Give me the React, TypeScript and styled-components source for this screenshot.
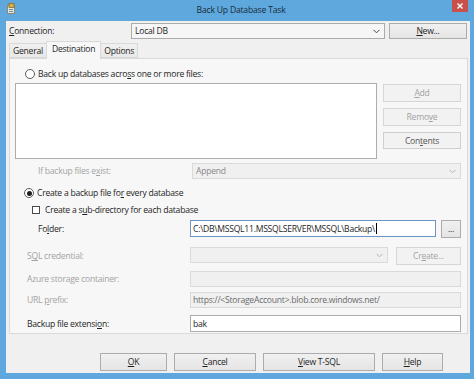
import React from 'react';
import styled, { createGlobalStyle } from 'styled-components';

const FONT = `"Open Sans", "Noto Sans", sans-serif`;

const Global = createGlobalStyle`
  html, body { margin: 0; padding: 0; background: #5ea8dd; }
  body { font-family: ${FONT}; font-size: 8.6px; letter-spacing: -0.25px; color: #1e1e1e; }
  * { box-sizing: border-box; }
`;

const Frame = styled.div`
  width: 474px;
  height: 379px;
  background: #5ea8dd;
  display: flex;
  flex-direction: column;
`;

const TitleBar = styled.div`
  height: 21px;
  display: flex;
  align-items: flex-start;
  padding: 0 6px 0 7px;
`;

const TitleIcon = styled.div`
  width: 9px;
  height: 11px;
  margin-top: 3px;
  display: flex;
`;

const TitleText = styled.div`
  flex: 1;
  text-align: center;
  padding-left: 14px;
  line-height: 20px;
  font-size: 8.6px;
  letter-spacing: -0.2px;
  color: #1b2a38;
`;

const CloseBtn = styled.div`
  width: 16px;
  height: 12px;
  background: #c7504b;
  color: #fff;
  display: flex;
  align-items: center;
  justify-content: center;
`;

const Body = styled.div`
  flex: 1;
  display: flex;
  padding: 0 4px 6px 6px;
`;

const Client = styled.div`
  flex: 1;
  background: #f0f0f0;
  display: flex;
  flex-direction: column;
  padding: 2px 2px 0 3px;
`;

const ConnRow = styled.div`
  display: grid;
  grid-template-columns: 118px 254px 78px;
  column-gap: 4px;
  height: 16px;
  align-items: center;
`;

const Label = styled.span<{ $disabled?: boolean }>`
  color: ${(p) => (p.$disabled ? '#a3a3a3' : '#1e1e1e')};
  white-space: nowrap;
`;

const U = styled.span`
  text-decoration: underline;
`;

const Combo = styled.div<{ $disabled?: boolean }>`
  height: 16px;
  border: 1px solid ${(p) => (p.$disabled ? '#dadada' : '#acacac')};
  background: ${(p) => (p.$disabled ? '#f0f0f0' : '#f6f6f6')};
  display: flex;
  align-items: center;
  padding: 0 4px 0 3px;
  color: ${(p) => (p.$disabled ? '#8a8a8a' : '#1e1e1e')};
  span.val { flex: 1; }
`;

const Button = styled.div<{ $disabled?: boolean; $soft?: boolean; $w?: number; $h?: number }>`
  width: ${(p) => (p.$w ? `${p.$w}px` : 'auto')};
  height: ${(p) => p.$h ?? 18}px;
  border: 1px solid ${(p) => (p.$disabled ? '#d6d6d6' : p.$soft ? '#cfcfcf' : '#acacac')};
  background: ${(p) =>
    p.$disabled || p.$soft ? '#f2f2f2' : 'linear-gradient(#f0f0f0, #e5e5e5)'};
  color: ${(p) => (p.$disabled ? '#a3a3a3' : p.$soft ? '#555' : '#1e1e1e')};
  display: flex;
  align-items: center;
  justify-content: center;
  white-space: nowrap;
`;

const TabStrip = styled.div`
  display: flex;
  align-items: flex-end;
  height: 17px;
  margin-top: 2px;
`;

const Tab = styled.div<{ $active?: boolean }>`
  height: ${(p) => (p.$active ? 18 : 15)}px;
  padding: 0 ${(p) => (p.$active ? 5 : 3)}px;
  margin: 0 ${(p) => (p.$active ? -1 : 0)}px ${(p) => (p.$active ? -1 : 0)}px;
  border: 1px solid #d9d9d9;
  border-bottom: ${(p) => (p.$active ? 'none' : '1px solid #d9d9d9')};
  background: ${(p) => (p.$active ? '#f7f7f7' : 'linear-gradient(#f0f0f0, #e8e8e8)')};
  position: relative;
  z-index: ${(p) => (p.$active ? 1 : 0)};
  display: flex;
  align-items: ${(p) => (p.$active ? 'flex-start' : 'center')};
  padding-top: ${(p) => (p.$active ? 1 : 0)}px;
`;

const Panel = styled.div`
  height: 276px;
  border: 1px solid #d9d9d9;
  background: #f7f7f7;
  display: flex;
  flex-direction: column;
  padding: 0 6px 0 5px;
`;

const OptionRow = styled.div<{ $mt: number; $indent: number }>`
  height: 14px;
  margin-top: ${(p) => p.$mt}px;
  padding-left: ${(p) => p.$indent}px;
  display: flex;
  align-items: center;
  gap: 3px;
`;

const Radio = styled.div<{ $checked?: boolean }>`
  width: 10px;
  height: 10px;
  border-radius: 50%;
  border: 1px solid #5c5c5c;
  background: #fff;
  display: flex;
  align-items: center;
  justify-content: center;
  &::after {
    content: '';
    width: 5px;
    height: 5px;
    border-radius: 50%;
    background: ${(p) => (p.$checked ? '#1e1e1e' : 'transparent')};
  }
`;

const Check = styled.div`
  width: 8px;
  height: 8px;
  border: 1px solid #4a4a4a;
  background: #fff;
  margin-right: 2px;
`;

const ListRow = styled.div`
  display: flex;
  gap: 6px;
  margin-top: 2px;
  height: 76px;
`;

const ListBox = styled.div`
  width: 362px;
  height: 76px;
  border: 1px solid #acacac;
  background: #fff;
`;

const SideButtons = styled.div`
  display: flex;
  flex-direction: column;
  gap: 6px;
  padding-top: 1px;
`;

const FormRow = styled.div<{ $mt: number; $h: number }>`
  display: grid;
  grid-template-columns: 175px 1fr;
  align-items: center;
  margin-top: ${(p) => p.$mt}px;
  height: ${(p) => p.$h}px;
`;

const FieldLabel = styled(Label)<{ $indent: number }>`
  padding-left: ${(p) => p.$indent}px;
`;

const FieldGroup = styled.div<{ $gap?: number; $inset?: number }>`
  display: flex;
  align-items: flex-start;
  height: 100%;
  gap: ${(p) => p.$gap ?? 5}px;
  padding-left: ${(p) => p.$inset ?? 0}px;
`;

const TextInput = styled.div<{ $disabled?: boolean; $focus?: boolean; $h?: number }>`
  flex: 1;
  height: ${(p) => p.$h ?? 16}px;
  border: 1px solid
    ${(p) => (p.$focus ? '#6d94c4' : p.$disabled ? '#dadada' : '#acacac')};
  background: ${(p) => (p.$disabled ? '#f0f0f0' : '#fff')};
  color: ${(p) => (p.$disabled ? '#6a6a6a' : '#1e1e1e')};
  display: flex;
  align-items: center;
  padding: 0 2px;
  white-space: nowrap;
  overflow: hidden;
`;

const Caret = styled.span`
  display: inline-block;
  width: 1px;
  height: 11px;
  background: #000;
  margin-left: 1px;
`;

const ComboFill = styled(Combo)`
  flex: 1;
`;

const ButtonRow = styled.div`
  display: flex;
  justify-content: flex-end;
  gap: 7px;
  margin-top: 19px;
  padding-right: 25px;
`;

const Chevron = ({ color }: { color: string }) => (
  <svg width="7" height="5" viewBox="0 0 7 5">
    <path d="M0.5 0.8 L3.5 3.8 L6.5 0.8" fill="none" stroke={color} strokeWidth="1" />
  </svg>
);

export default function App() {
  return (
    <>
      <Global />
      <Frame>
        <TitleBar>
          <TitleIcon>
            <svg width="9" height="11" viewBox="0 0 9 11">
              <rect x="0.5" y="2.5" width="7" height="8" fill="#e9e4d2" stroke="#8a8a7a" />
              <rect x="2" y="0.5" width="5" height="4" fill="#d9b24a" stroke="#8a6d2a" strokeWidth="0.8" />
              <rect x="2" y="6" width="4" height="1" fill="#6a8fb5" />
              <rect x="2" y="8" width="4" height="1" fill="#6a8fb5" />
            </svg>
          </TitleIcon>
          <TitleText>Back Up Database Task</TitleText>
          <CloseBtn>
            <svg width="6" height="6" viewBox="0 0 6 6">
              <path d="M0.5 0.5 L5.5 5.5 M5.5 0.5 L0.5 5.5" stroke="#fff" strokeWidth="1.4" />
            </svg>
          </CloseBtn>
        </TitleBar>
        <Body>
          <Client>
            <ConnRow>
              <Label>
                <U>C</U>onnection:
              </Label>
              <Combo>
                <span className="val">Local DB</span>
                <Chevron color="#444" />
              </Combo>
              <Button $h={16}>
                <span>
                  <U>N</U>ew...
                </span>
              </Button>
            </ConnRow>

            <TabStrip>
              <Tab>General</Tab>
              <Tab $active>Destination</Tab>
              <Tab>Options</Tab>
            </TabStrip>

            <Panel>
              <OptionRow $mt={8} $indent={10}>
                <Radio />
                <Label>
                  Back up databases acro<U>s</U>s one or more files:
                </Label>
              </OptionRow>

              <ListRow>
                <ListBox />
                <SideButtons>
                  <Button $disabled $w={78}>
                    <span>
                      <U>A</U>dd
                    </span>
                  </Button>
                  <Button $disabled $w={78}>
                    <span>
                      Remo<U>v</U>e
                    </span>
                  </Button>
                  <Button $soft $w={78} $h={17}>
                    <span>
                      Con<U>t</U>ents
                    </span>
                  </Button>
                </SideButtons>
              </ListRow>

              <FormRow $mt={4} $h={16}>
                <FieldLabel $indent={23} $disabled>
                  If backup files e<U>x</U>ist:
                </FieldLabel>
                <FieldGroup $inset={2}>
                  <ComboFill $disabled>
                    <span className="val">Append</span>
                    <Chevron color="#b5b5b5" />
                  </ComboFill>
                </FieldGroup>
              </FormRow>

              <OptionRow $mt={7} $indent={9}>
                <Radio $checked />
                <Label>
                  Create a backup file fo<U>r</U> every database
                </Label>
              </OptionRow>

              <OptionRow $mt={3} $indent={17}>
                <Check />
                <Label>
                  Create a s<U>u</U>b-directory for each database
                </Label>
              </OptionRow>

              <FormRow $mt={3} $h={17}>
                <FieldLabel $indent={23}>
                  Fo<U>l</U>der:
                </FieldLabel>
                <FieldGroup>
                  <TextInput $focus $h={17}>
                    C:\DB\MSSQL11.MSSQLSERVER\MSSQL\Backup\
                    <Caret />
                  </TextInput>
                  <Button $w={20} $h={18}>
                    ...
                  </Button>
                </FieldGroup>
              </FormRow>

              <FormRow $mt={10} $h={18}>
                <FieldLabel $indent={12} $disabled>
                  S<U>Q</U>L credential:
                </FieldLabel>
                <FieldGroup $gap={8}>
                  <ComboFill $disabled>
                    <span className="val" />
                    <Chevron color="#b5b5b5" />
                  </ComboFill>
                  <Button $disabled $w={65}>
                    <span>
                      Cr<U>e</U>ate...
                    </span>
                  </Button>
                </FieldGroup>
              </FormRow>

              <FormRow $mt={6} $h={16}>
                <FieldLabel $indent={12} $disabled>
                  Azure storage container:
                </FieldLabel>
                <FieldGroup>
                  <TextInput $disabled />
                </FieldGroup>
              </FormRow>

              <FormRow $mt={5} $h={16}>
                <FieldLabel $indent={12} $disabled>
                  URL <U>p</U>refix:
                </FieldLabel>
                <FieldGroup>
                  <TextInput $disabled>
                    https://&lt;StorageAccount&gt;.blob.core.windows.net/
                  </TextInput>
                </FieldGroup>
              </FormRow>

              <FormRow $mt={7} $h={17}>
                <FieldLabel $indent={12}>
                  Backup file extensi<U>o</U>n:
                </FieldLabel>
                <FieldGroup>
                  <TextInput $h={17}>bak</TextInput>
                </FieldGroup>
              </FormRow>
            </Panel>

            <ButtonRow>
              <Button $w={67}>
                <span>
                  <U>O</U>K
                </span>
              </Button>
              <Button $w={82}>
                <span>
                  <U>C</U>ancel
                </span>
              </Button>
              <Button $w={112}>
                <span>
                  <U>V</U>iew T-SQL
                </span>
              </Button>
              <Button $w={61}>
                <span>
                  <U>H</U>elp
                </span>
              </Button>
            </ButtonRow>
          </Client>
        </Body>
      </Frame>
    </>
  );
}
